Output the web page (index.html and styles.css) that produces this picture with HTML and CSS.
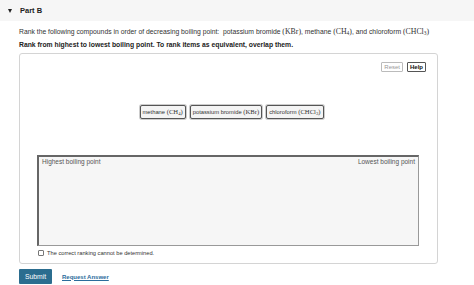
FILE: index.html
```html
<!DOCTYPE html>
<html>
<head>
<meta charset="utf-8">
<link rel="stylesheet" href="styles.css">
</head>
<body>
<div class="header">
  <span class="tri"></span>
  <span class="part">Part B</span>
</div>
<div class="content">
  <p class="q">Rank the following compounds in order of decreasing boiling point:&nbsp; potassium bromide <span class="m">(KBr)</span>, methane <span class="m">(CH<sub>4</sub>)</span>, and chloroform <span class="m">(CHCl<sub>3</sub>)</span></p>
  <p class="instr">Rank from highest to lowest boiling point. To rank items as equivalent, overlap them.</p>
  <div class="box">
    <div class="tools">
      <span class="btn reset">Reset</span>
      <span class="btn help">Help</span>
    </div>
    <div class="chips">
      <span class="chip">methane <span class="m">(CH<sub>4</sub>)</span></span>
      <span class="chip">potassium bromide <span class="m">(KBr)</span></span>
      <span class="chip">chloroform <span class="m">(CHCl<sub>3</sub>)</span></span>
    </div>
    <div class="rank">
      <span>Highest boiling point</span>
      <span>Lowest boiling point</span>
    </div>
    <label class="check"><span class="cb"></span>The correct ranking cannot be determined.</label>
  </div>
  <div class="actions">
    <span class="submit">Submit</span>
    <span class="link">Request Answer</span>
  </div>
</div>
</body>
</html>
```
FILE: styles.css
```css
* { box-sizing: border-box; }
body {
  margin: 0;
  font-family: "Liberation Sans", Arial, sans-serif;
  color: #222;
  background: #fff;
}
.header {
  height: 21px;
  background: #f6f6f6;
  display: flex;
  align-items: center;
  padding-left: 8px;
}
.tri {
  width: 0; height: 0;
  border-left: 2.5px solid transparent;
  border-right: 2.5px solid transparent;
  border-top: 4px solid #222;
  margin-right: 8px;
  margin-top: 1px;
}
.part {
  font-weight: bold;
  font-size: 7.5px;
  color: #222;
}
.content {
  padding: 0 36px 0 19px;
}
.q {
  margin: 6px 0 0 0;
  font-size: 6.8px;
  line-height: 9px;
  color: #333;
  white-space: nowrap;
}
.m {
  font-family: "Liberation Serif", "Times New Roman", serif;
  font-size: 1.15em;
}
sub { font-size: 0.7em; vertical-align: -1px; line-height: 0; }
.instr {
  margin: 4px 0 0 0;
  font-size: 6.8px;
  line-height: 9px;
  font-weight: bold;
  color: #222;
  white-space: nowrap;
}
.box {
  margin-top: 4px;
  height: 211px;
  border: 1px solid #d4d4d4;
  border-radius: 3px;
  padding: 8px 11px 0 17px;
  display: flex;
  flex-direction: column;
}
.tools {
  display: flex;
  justify-content: flex-end;
  gap: 4px;
}
.btn {
  font-size: 6px;
  line-height: 8px;
  padding: 0 2px;
  border: 1px solid #aaa;
  border-radius: 1px;
}
.reset { color: #999; border-color: #bbb; }
.help { color: #111; font-weight: bold; border-color: #555; }
.chips {
  margin-top: 33px;
  display: flex;
  justify-content: center;
  gap: 4px;
  padding-right: 0;
}
.chip {
  font-size: 5.8px;
  line-height: 8px;
  color: #333;
  background: #f4f4f4;
  border: 1px solid #555;
  border-radius: 2px;
  box-shadow: 0 0 0 1px #ccc;
  padding: 2px 2px;
  white-space: nowrap;
}
.rank {
  margin-top: 36px;
  margin-right: 7px;
  height: 91px;
  background: #f6f6f6;
  border: 1px solid #999;
  border-left: 2px solid #666;
  border-top: 2px solid #666;
  display: flex;
  justify-content: space-between;
  padding: 1px 3px;
  font-size: 6.5px;
  line-height: 8px;
  color: #555;
}
.check {
  margin-top: 4px;
  display: flex;
  align-items: center;
  font-size: 5.7px;
  color: #333;
}
.cb {
  width: 6px;
  height: 6px;
  border: 1px solid #777;
  border-radius: 1px;
  margin-right: 3px;
  margin-left: 1px;
}
.actions {
  margin-top: 5px;
  display: flex;
  align-items: center;
  gap: 10px;
}
.submit {
  background: #2b6d8f;
  color: #fff;
  font-size: 6.8px;
  width: 33px;
  height: 15px;
  display: flex;
  align-items: center;
  justify-content: center;
  border-radius: 1px;
}
.link {
  color: #2b6d9c;
  font-size: 6px;
  text-decoration: underline;
  font-weight: bold;
}
```
